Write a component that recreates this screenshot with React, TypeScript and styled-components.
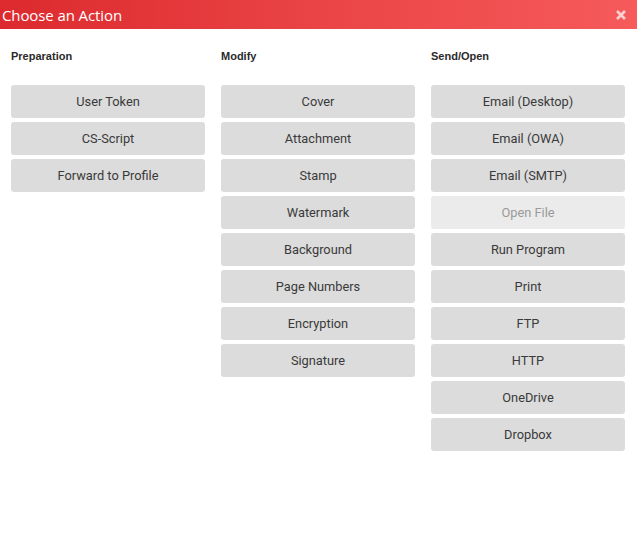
import React from "react";
import styled, { createGlobalStyle } from "styled-components";

const GlobalStyle = createGlobalStyle`
  html, body {
    margin: 0;
    padding: 0;
    background: #ffffff;
  }
`;

const Dialog = styled.div`
  width: 637px;
  height: 538px;
  background: #ffffff;
  display: flex;
  flex-direction: column;
`;

const TitleBar = styled.div`
  height: 29px;
  flex: none;
  display: flex;
  align-items: center;
  justify-content: space-between;
  padding: 0 10px 0 2px;
  background: linear-gradient(90deg, #dc2a2e 0%, #ea4446 50%, #f65a5a 100%);
`;

const Title = styled.div`
  font-family: "Open Sans", "Liberation Sans", sans-serif;
  font-size: 15px;
  color: #ffffff;
  letter-spacing: -0.1px;
`;

const Close = styled.button`
  border: none;
  background: none;
  padding: 0;
  width: 12px;
  height: 12px;
  display: flex;
  cursor: pointer;
`;

const Columns = styled.div`
  display: grid;
  grid-template-columns: repeat(3, 194px);
  column-gap: 16px;
  padding: 0 11px;
`;

const Column = styled.div`
  display: flex;
  flex-direction: column;
  gap: 4px;
`;

const Heading = styled.div`
  font-family: "Liberation Sans", Arial, sans-serif;
  font-weight: bold;
  font-size: 11px;
  color: #2b2b2b;
  height: 52px;
  padding-top: 21px;
  box-sizing: border-box;
`;

const ActionButton = styled.button<{ disabled?: boolean }>`
  height: 33px;
  border: none;
  border-radius: 3px;
  background: ${(p) => (p.disabled ? "#ebebeb" : "#dcdcdc")};
  color: ${(p) => (p.disabled ? "#9a9a9a" : "#3a3a3a")};
  font-family: Roboto, "Liberation Sans", sans-serif;
  font-size: 12.8px;
  cursor: ${(p) => (p.disabled ? "default" : "pointer")};
  padding: 0;
`;

const groups = [
  { title: "Preparation", items: ["User Token", "CS-Script", "Forward to Profile"] },
  {
    title: "Modify",
    items: ["Cover", "Attachment", "Stamp", "Watermark", "Background", "Page Numbers", "Encryption", "Signature"],
  },
  {
    title: "Send/Open",
    items: ["Email (Desktop)", "Email (OWA)", "Email (SMTP)", "Open File", "Run Program", "Print", "FTP", "HTTP", "OneDrive", "Dropbox"],
  },
];

const disabledItems = ["Open File"];

export default function App() {
  return (
    <>
      <GlobalStyle />
      <Dialog>
        <TitleBar>
          <Title>Choose an Action</Title>
          <Close aria-label="Close">
            <svg width="12" height="12" viewBox="0 0 12 12">
              <path d="M2 2 L10 10 M10 2 L2 10" stroke="#fdd0d0" strokeWidth="2.6" strokeLinecap="butt" />
            </svg>
          </Close>
        </TitleBar>
        <Columns>
          {groups.map((g) => (
            <Column key={g.title}>
              <Heading>{g.title}</Heading>
              {g.items.map((item) => (
                <ActionButton key={item} disabled={disabledItems.includes(item)}>
                  {item}
                </ActionButton>
              ))}
            </Column>
          ))}
        </Columns>
      </Dialog>
    </>
  );
}
